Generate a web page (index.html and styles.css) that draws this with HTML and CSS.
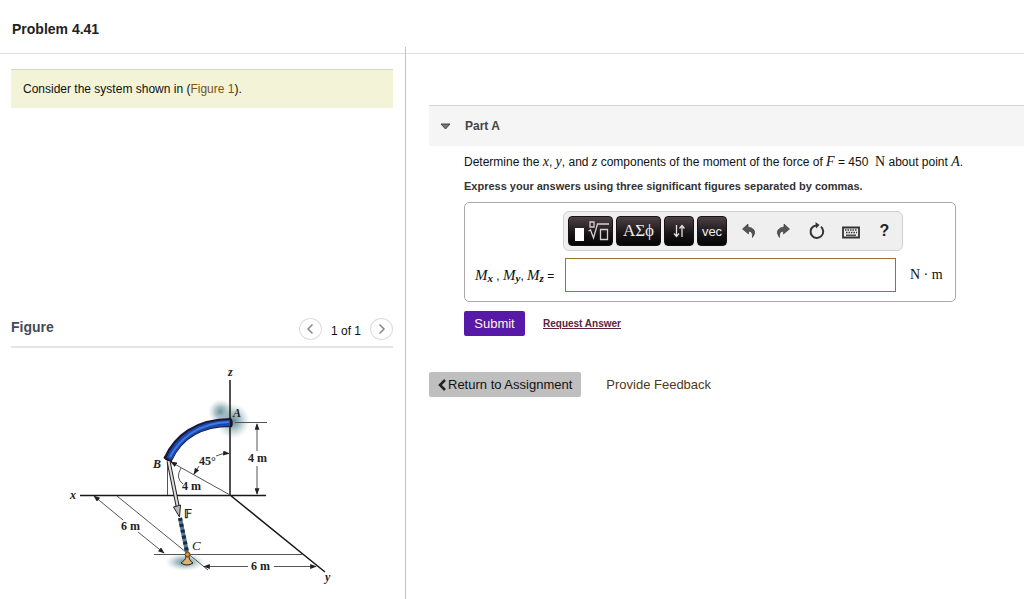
FILE: index.html
```html
<!DOCTYPE html>
<html lang="en">
<head>
<meta charset="utf-8">
<title>Problem 4.41</title>
<link rel="stylesheet" href="styles.css">
</head>
<body>
<header class="page-header"><h1>Problem 4.41</h1></header>
<main class="columns">
  <section class="left">
    <p class="intro">Consider the system shown in (<a href="#figure">Figure 1</a>).</p>
    <div class="figure-head">
      <h2>Figure</h2>
      <nav class="pager" aria-label="Figure pages">
        <button type="button" aria-label="Previous figure"><svg width="8" height="12" viewBox="0 0 8 12"><path d="M6.500 1.500 2 6l4.500 4.500"/></svg></button>
        <span>1 of 1</span>
        <button type="button" aria-label="Next figure"><svg width="8" height="12" viewBox="0 0 8 12"><path d="M1.500 1.500 6 6l-4.500 4.500"/></svg></button>
      </nav>
    </div>
    <svg class="diagram" id="figure" viewBox="12 356 382 238" role="img" aria-label="Curved rod AB with cable BC">
      <defs>
        <radialGradient id="haze"><stop offset="0" stop-color="#5f8790"/><stop offset=".45" stop-color="#8fafb5" stop-opacity=".75"/><stop offset="1" stop-color="#c5d6d8" stop-opacity="0"/></radialGradient>
        <marker id="arrow" viewBox="0 0 8 6" refX="7" refY="3" markerWidth="7" markerHeight="5" markerUnits="userSpaceOnUse" orient="auto-start-reverse"><path d="M0 0 8 3 0 6z" fill="#222"/></marker>
      </defs>
      <ellipse cx="222" cy="412" rx="13" ry="13" fill="url(#haze)"/>
      <ellipse cx="234" cy="421" rx="17" ry="18" fill="url(#haze)"/>
      <ellipse cx="186" cy="562" rx="20" ry="9" fill="url(#haze)"/>
      <g class="axis">
        <path d="M231 380V495M81 495.500H267M231 495 326 572"/>
      </g>
      <g class="thin">
        <path d="M236 422.500H268M168.500 462V495M118 496 209 570M155 554.500H303"/>
        <path d="M231 495 172 462" marker-end="url(#arrow)"/>
        <path d="M258 451V424" marker-end="url(#arrow)"/>
        <path d="M258 466V494" marker-end="url(#arrow)"/>
        <path d="M124 520 95 496" marker-end="url(#arrow)"/>
        <path d="M139 532 165 553" marker-end="url(#arrow)"/>
        <path d="M249 566.500H205" marker-end="url(#arrow)"/>
        <path d="M275 566.500H317" marker-end="url(#arrow)"/>
        <path d="M217 456Q223 453 230 453.500" marker-end="url(#arrow)"/>
        <path d="M200 466 195 474" marker-end="url(#arrow)"/>
        <path d="M182 468Q176 478 184 484"/>
      </g>
      <path d="M169 459C178 439 197 422.500 232 422.500" fill="none" stroke="#201535" stroke-width="9"/>
      <path d="M170 459C179 439 198 423 231 423" fill="none" stroke="#1748b0" stroke-width="6"/>
      <path d="M171 457C180 440 198 423 230 422" fill="none" stroke="#437bdc" stroke-width="2"/>
      <path d="M165 457q4 4 8 4M231 418q3 4 1 9" fill="none" stroke="#171326" stroke-width="2"/>
      <path d="M169.500 461 179 508" stroke="#222" stroke-width="4"/>
      <path d="M169.500 461 179 508" stroke="#ddd" stroke-width="2"/>
      <path d="m174.500 507 7-2-1 12z" fill="#bbb" stroke="#222"/>
      <path d="M181 518 188 552" stroke="#527996" stroke-width="4"/>
      <path d="M181 518 188 552" stroke="#172c40" stroke-width="4" stroke-dasharray="3 3"/>
      <path d="M187 556c0 4-3 5-5 7q6 4 12 0c-3-2-4-4-4-7z" fill="#d8b474" stroke="#352315"/>
      <circle cx="188.500" cy="554.500" r="2.500" fill="#d49137" stroke="#5e3b1b"/>
      <g class="letters">
        <text x="229" y="376">z</text><text x="234" y="417">A</text><text x="154" y="468">B</text><text x="71" y="499">x</text><text x="193" y="550" class="plain">C</text><text x="326" y="581">y</text>
      </g>
      <g class="lengths">
        <text x="200" y="465">45°</text><text x="249" y="462">4 m</text><text x="183" y="490">4 m</text><text x="122" y="530">6 m</text><text x="252" y="570">6 m</text><text x="185" y="518">𝔽</text>
      </g>
    </svg>
  </section>
  <section class="right">
    <div class="part-head">
      <button type="button" aria-label="Collapse Part A"><svg width="11" height="7" viewBox="0 0 11 7"><path d="M1 1h9L5.500 6z" fill="#777" stroke="#444"/></svg></button>
      <h2>Part A</h2>
    </div>
    <form class="part-body">
      <p>Determine the <i>x</i>, <i>y</i>, and <i>z</i> components of the moment of the force of <i>F</i> = 450 &nbsp;<span class="unit-n">N</span> about point <i>A</i>.</p>
      <p class="hint">Express your answers using three significant figures separated by commas.</p>
      <div class="answer">
        <div class="toolbar">
          <button type="button" class="dark wide" aria-label="Templates"><svg width="36" height="24" viewBox="0 0 36 24"><path d="M2 9h9v13H2z" fill="#fff"/><g fill="none" stroke="#d4cfd0" stroke-width="1.300"><path d="M17 3h4v5h-4zM15.500 12l2-1 3 8 4-14H36M27.500 10.500h7v10h-7z"/></g></svg></button>
          <button type="button" class="dark wide greek">ΑΣϕ</button>
          <button type="button" class="dark" aria-label="Subscript and superscript"><svg width="14" height="16" viewBox="0 0 14 16"><path d="M4.500 2v11M2 10.500l2.500 3 2.500-3M10 14V3M7.500 5.500 10 2.500l2.500 3" fill="none" stroke="#e4e0e1" stroke-width="1.300"/></svg></button>
          <button type="button" class="dark">vec</button>
          <div class="tools">
            <button type="button" class="tool" aria-label="Undo"><svg width="16" height="16" viewBox="0 0 16 16"><path d="M7 1 1.500 6 7.500 11V8.200Q12 8 11.500 14.500 15 10 13 7 11 4.300 7 4z" fill="#555" stroke="#333" stroke-width=".6"/></svg></button>
            <button type="button" class="tool" aria-label="Redo"><svg width="16" height="16" viewBox="0 0 16 16"><path d="M9 1 14.500 6 8.500 11V8.200Q4 8 4.500 14.500 1 10 3 7 5 4.300 9 4z" fill="#555" stroke="#333" stroke-width=".6"/></svg></button>
            <button type="button" class="tool" aria-label="Reset"><svg width="18" height="18" viewBox="0 0 18 18"><path d="M13 4.800A6.300 6.300 0 1 1 5.500 4.300L9 3.200" fill="none" stroke="#333" stroke-width="2"/><path d="M7.500 0 11.500 3 8 6.500z" fill="#333"/></svg></button>
            <button type="button" class="tool" aria-label="Keyboard"><svg width="18" height="18" viewBox="0 0 18 18"><path d="M1 5.500h16v10H1z" fill="#eee" stroke="#333" stroke-width="1.800"/><path d="M3 8h12M4 10.500h11" stroke="#333" stroke-width="1.500" stroke-dasharray="1.500 1"/><path d="M4 13.200h10" stroke="#333" stroke-width="1.300"/></svg></button>
            <button type="button" class="tool help">?</button>
          </div>
        </div>
        <label for="moment"><i>M<sub>x</sub></i> , <i>M<sub>y</sub></i>, <i>M<sub>z</sub></i> =</label>
        <input id="moment" type="text">
        <span class="unit">N · m</span>
      </div>
      <div class="actions">
        <button type="submit" class="submit">Submit</button>
        <a href="#answer">Request Answer</a>
      </div>
    </form>
    <div class="footer-links">
      <a class="return" href="#assignment"><svg width="8" height="12" viewBox="0 0 8 12"><path d="M7 1 2 6l5 5" fill="none" stroke="#222" stroke-width="2.500"/></svg> Return to Assignment</a>
      <a class="feedback" href="#feedback">Provide Feedback</a>
    </div>
  </section>
</main>
</body>
</html>
```
FILE: styles.css
```css
* { box-sizing: border-box; }
body { margin: 0; background: #fff; color: #111; font: 12px/16px "Liberation Sans", Arial, sans-serif; }
h1, h2, p { margin: 0; }
h1, h2 { font-size: 14px; line-height: 18px; }
button { font-family: inherit; padding: 0; cursor: pointer; display: flex; align-items: center; justify-content: center; }
.page-header { padding: 20px 12px 15px; border-bottom: 1px solid #dedede; color: #222; }
.columns { display: grid; grid-template-columns: minmax(0, 406fr) minmax(0, 618fr); margin-top: -7px; min-height: calc(100vh - 47px); }
.left { padding: 22px 12px 0 11px; border-right: 1px solid #d3bfae; }
.intro { padding: 12px; background: #f2f3d7; border-top: 1px solid #d5d6c4; line-height: 14px; }
.intro a { color: #7a5415; text-decoration: none; }
.figure-head { margin-top: 206px; height: 34px; display: flex; justify-content: space-between; border-bottom: 2px solid #e4e4e4; }
.figure-head h2 { color: #444b55; padding-top: 4px; }
.pager { display: flex; gap: 9px; align-items: center; height: 32px; padding-bottom: 2px; }
.pager button { width: 23px; height: 22px; border: 1px solid #ddd; border-radius: 50%; background: #fff; }
.pager path { fill: none; stroke: #888; stroke-width: 1.500; }
.pager span { padding-top: 3px; }
.diagram { display: block; width: 100%; margin-top: 8px; }
.axis { fill: none; stroke: #181818; stroke-width: 1.500; }
.thin { fill: none; stroke: #555; stroke-width: 1; }
.letters, .lengths { font: bold 12px "Liberation Serif", "Times New Roman", serif; fill: #222; }
.letters { font-style: italic; }
.letters .plain { font-weight: normal; font-size: 13px; }
.right { padding: 58px 0 0 23px; }
.part-head { display: flex; align-items: center; gap: 14px; height: 41px; padding-left: 11px; background: #f5f5f5; border-top: 1px solid #d4d4d4; }
.part-head button { border: 0; background: none; }
.part-head h2 { font-size: 12px; color: #444; }
.part-body { padding: 8px 68px 0 35px; }
.part-body p { white-space: nowrap; }
.part-body i, .unit-n, .unit { font-family: "Liberation Serif", "Times New Roman", serif; font-size: 14px; line-height: 16px; }
.hint { margin: 8px 0; font-weight: bold; color: #333; }
.part-body .hint { margin: 8px 0; font-size: 11px; }
.answer { display: grid; grid-template-columns: 100px 1fr 59px; border: 1px solid #aaa; border-radius: 5px; padding: 8px 0 9px; row-gap: 7px; align-items: center; }
.toolbar { grid-column: 2 / 4; justify-self: start; margin-left: -2px; display: flex; align-items: center; gap: 3px; height: 40px; padding: 0 2px 0 4px; background: #efefef; border: 1px solid #d0d0d0; border-radius: 6px; }
.tools { display: flex; gap: 3px; padding-left: 3px; }
.dark { width: 30px; height: 30px; border: 1px solid #171315; border-radius: 4px; background: linear-gradient(#4d4146, #181416 60%, #050505); color: #eee; font-size: 13px; }
.wide { width: 45px; }
.greek { font: 17px "Liberation Serif", serif; }
.tool { width: 31px; height: 30px; border: 0; background: none; color: #222; }
.help { font-size: 16px; font-weight: bold; }
.answer label { padding-left: 10px; white-space: nowrap; }
.answer label i { font-size: 15px; }
.answer sub { font-size: 11px; font-weight: bold; line-height: 0; vertical-align: -2px; }
.answer input { width: 100%; height: 34px; border: 1px solid #967331; background: #fff; }
.unit { padding-left: 14px; white-space: nowrap; }
.actions { display: flex; align-items: center; gap: 18px; margin-top: 9px; }
.submit { width: 61px; height: 25px; border: 0; border-radius: 2px; background: #571aa8; color: #fff5dc; font-size: 13px; }
.actions a { color: #5a2440; font-size: 10px; font-weight: bold; }
.footer-links { display: flex; align-items: center; gap: 25px; margin-top: 36px; font-size: 13px; }
.return { display: flex; align-items: center; gap: 2px; height: 25px; padding: 0 9px; background: #bfbfbf; border-radius: 2px; color: #111; text-decoration: none; }
.feedback { color: #523712; text-decoration: none; }
```
